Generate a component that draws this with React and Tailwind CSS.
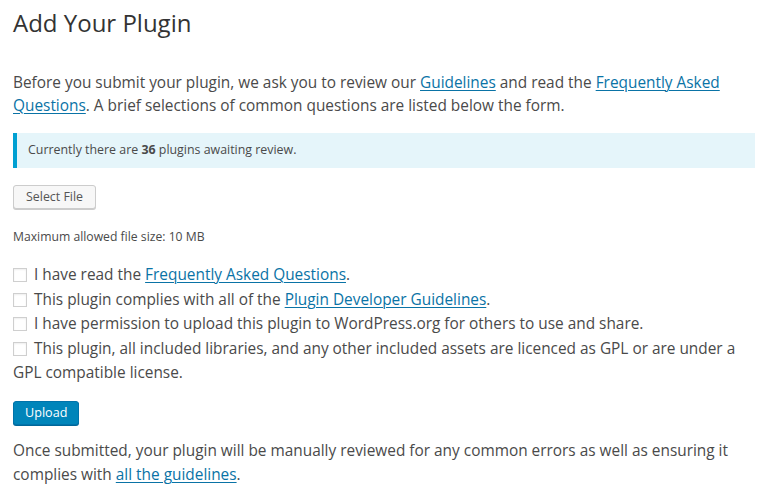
import React from "react";

const A = ({ children }) => (
  <a href="#" className="text-[#0a73a6] underline underline-offset-2 decoration-1">
    {children}
  </a>
);

const Box = () => (
  <span className="inline-block align-[-2px] mr-[7px] w-[14px] h-[14px] border border-[#cfcfcf] bg-white shadow-[inset_0_1px_2px_rgba(0,0,0,0.07)]"></span>
);

export default function App() {
  return (
    <div
      className="w-[768px] h-[490px] bg-white overflow-hidden text-[#4a4a4a]"
      style={{ fontFamily: '"Open Sans", sans-serif' }}
    >
      <div className="pl-[13px] w-[755px]">
        <h1 className="pt-[6px] text-[24px] leading-[34px] text-[#333] font-normal">Add Your Plugin</h1>
        <p className="mt-[31px] text-[15.4px] leading-[23px]">
          Before you submit your plugin, we ask you to review our <A>Guidelines</A> and read the{" "}
          <A>Frequently Asked Questions</A>. A brief selections of common questions are listed below the form.
        </p>
        <div className="mt-[16px] h-[35px] flex items-center border-l-4 border-[#00a0d2] bg-[#e5f5fa] pl-[11px] text-[12.4px]">
          <span>
            Currently there are <b className="font-bold">36</b> plugins awaiting review.
          </span>
        </div>
        <button className="mt-[17px] h-[24px] px-[12px] text-[12.4px] leading-[22px] text-[#555] bg-[#f7f7f7] border border-[#ccc] rounded-[3px] shadow-[0_1px_0_#ccc]">
          Select File
        </button>
        <p className="mt-[19px] text-[12.2px] leading-[18px]">Maximum allowed file size: 10 MB</p>
        <div className="mt-[17px] text-[15.4px] leading-[24.5px]">
          <div>
            <Box />I have read the <A>Frequently Asked Questions</A>.
          </div>
          <div>
            <Box />This plugin complies with all of the <A>Plugin Developer Guidelines</A>.
          </div>
          <div>
            <Box />I have permission to upload this plugin to WordPress.org for others to use and share.
          </div>
          <div>
            <Box />This plugin, all included libraries, and any other included assets are licenced as GPL or are under a GPL compatible license.
          </div>
        </div>
        <button className="mt-[15px] h-[24px] px-[11px] text-[12.6px] leading-[22px] text-white bg-[#0085ba] border border-[#0073aa] rounded-[3px] shadow-[0_1px_0_#006799]">
          Upload
        </button>
        <p className="mt-[14px] text-[15.4px] leading-[24px]">
          Once submitted, your plugin will be manually reviewed for any common errors as well as ensuring it complies with{" "}
          <A>all the guidelines</A>.
        </p>
      </div>
    </div>
  );
}
